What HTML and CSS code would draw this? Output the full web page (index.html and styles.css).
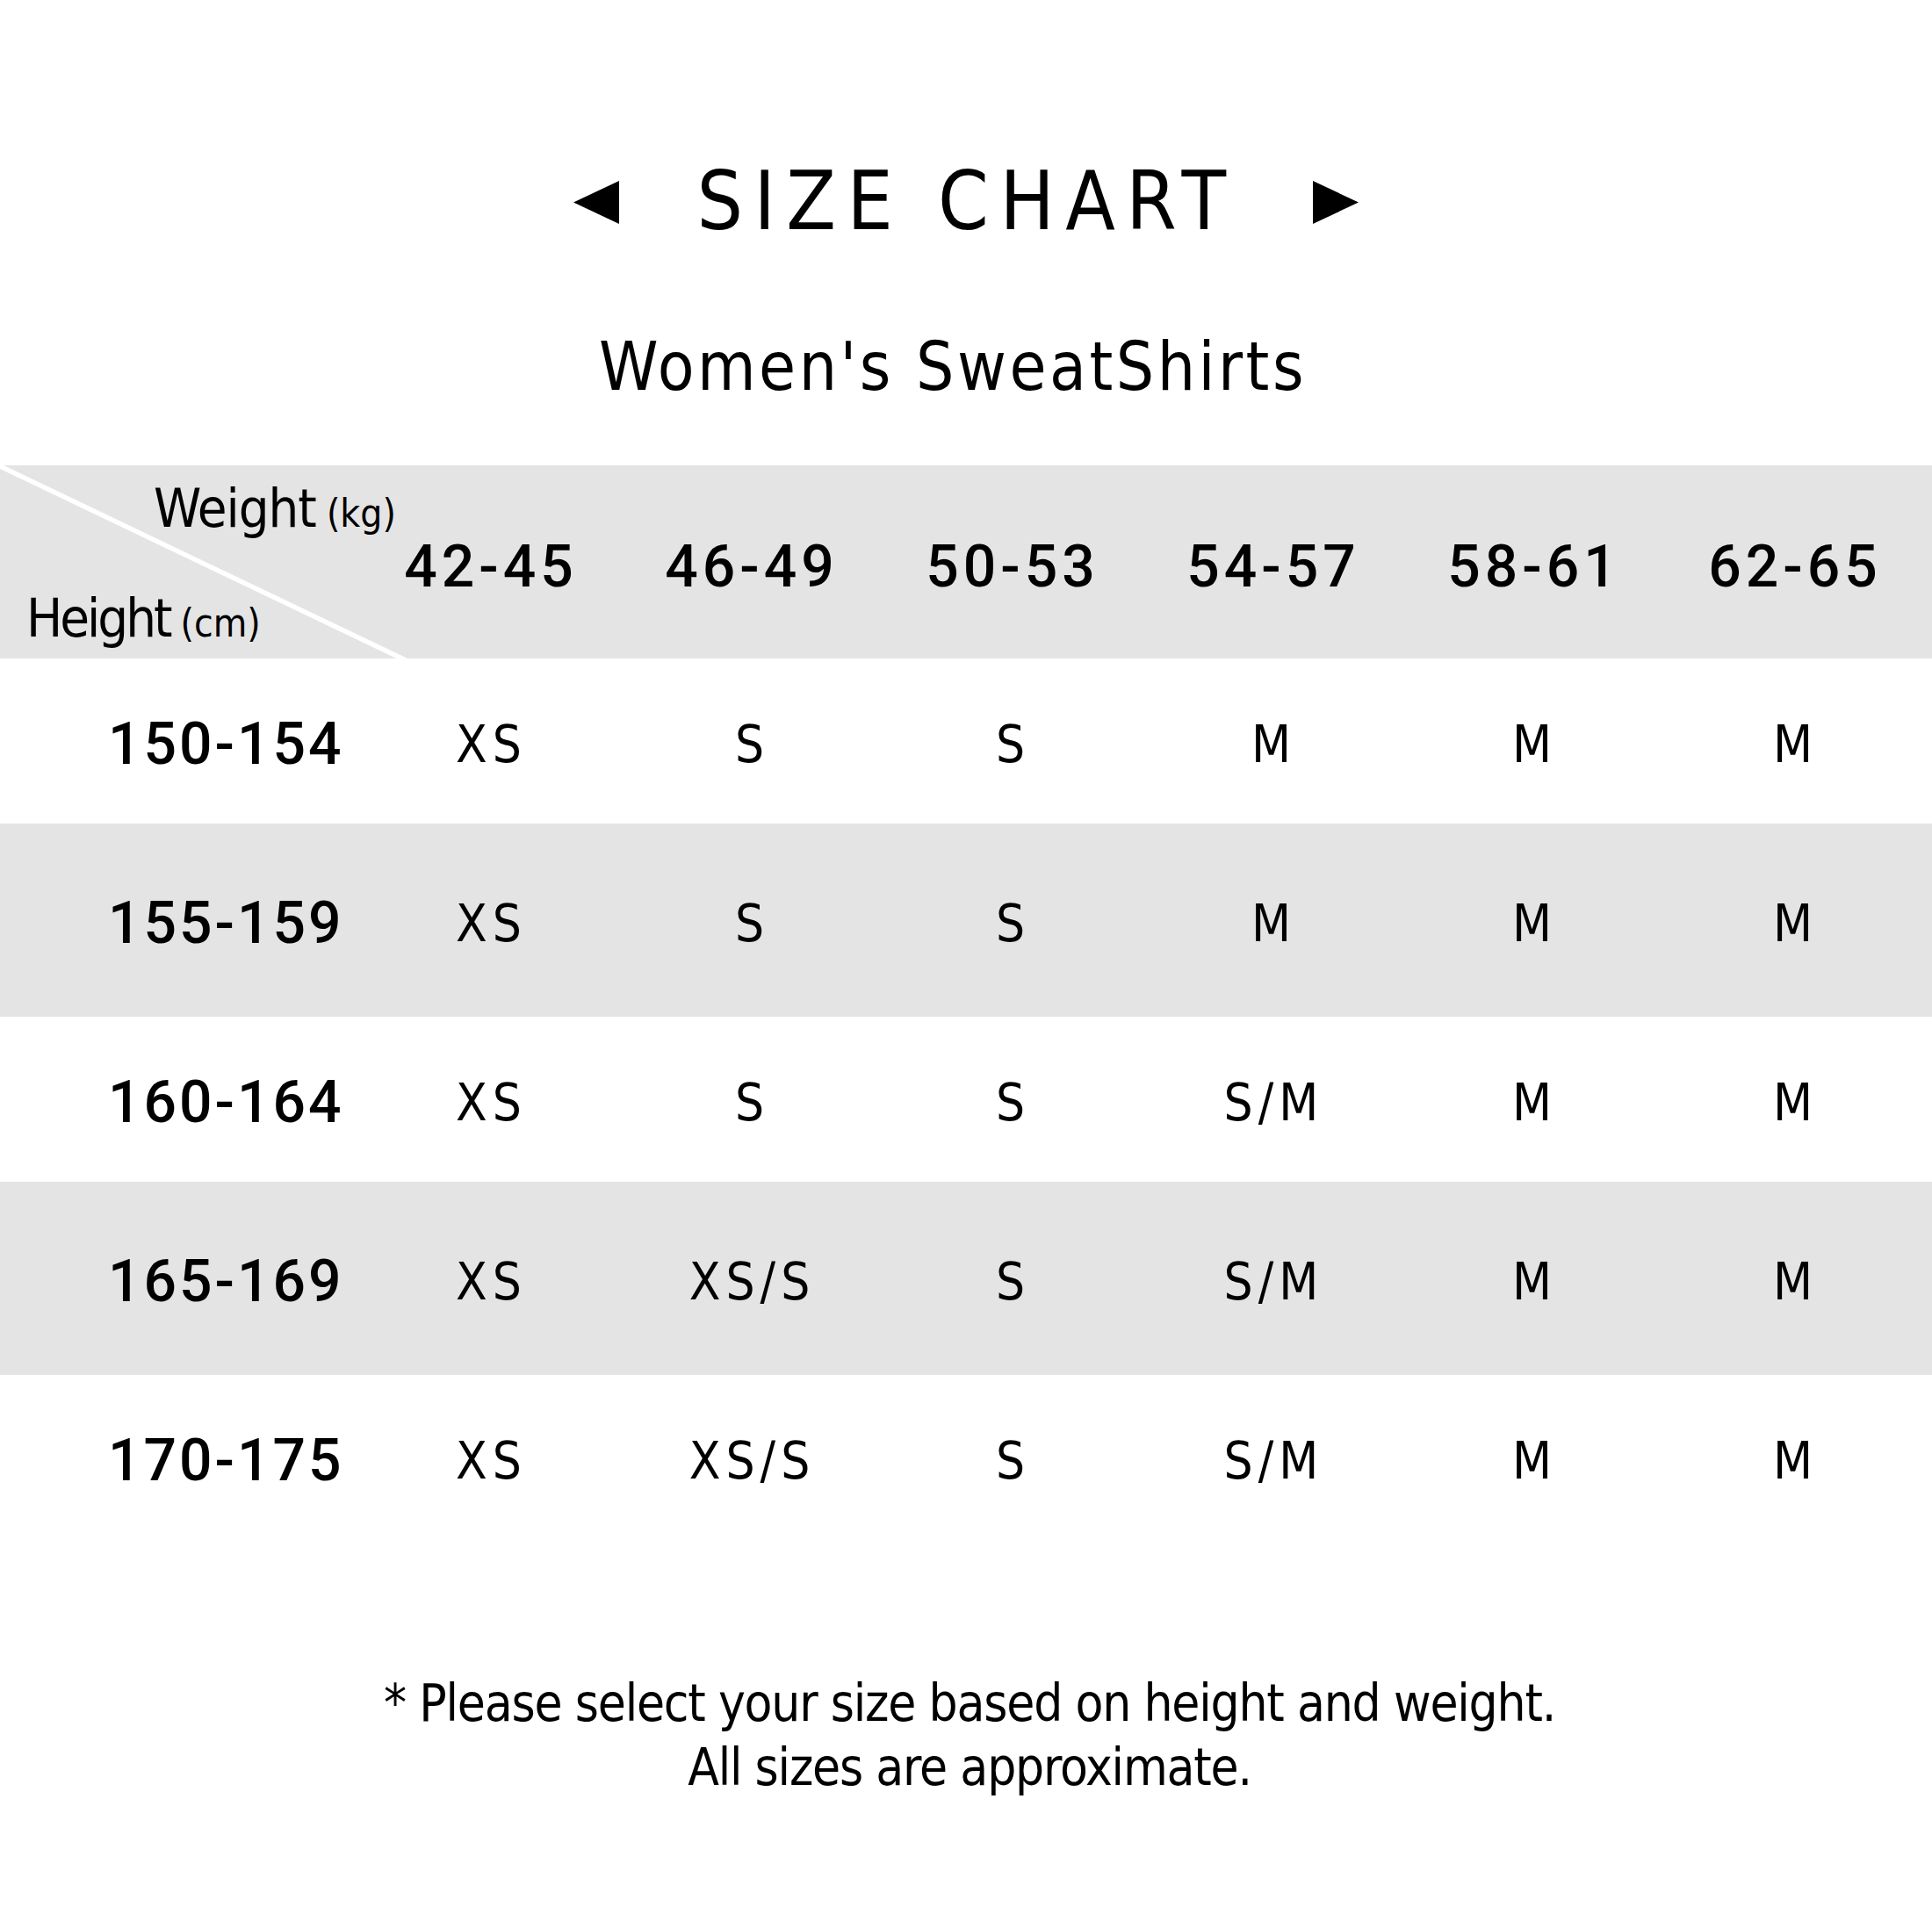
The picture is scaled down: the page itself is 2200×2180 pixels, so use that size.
FILE: index.html
```html
<!DOCTYPE html>
<html lang="en">
<head>
<meta charset="utf-8">
<title>Size Chart</title>
<link rel="stylesheet" href="styles.css">
</head>
<body>
<main class="page">
  <header class="title-row">
    <svg class="arrow" viewBox="0 0 52 49" width="52" height="49"><polygon points="52,0 52,49 0,24.5" fill="#000"/></svg>
    <h1 class="title">SIZE CHART</h1>
    <svg class="arrow" viewBox="0 0 52 49" width="52" height="49"><polygon points="0,0 0,49 52,24.5" fill="#000"/></svg>
  </header>
  <h2 class="subtitle">Women's SweatShirts</h2>

  <section class="chart">
    <div class="row head">
      <svg class="diag" width="470" height="220" viewBox="0 0 470 220"><line x1="-2" y1="0" x2="462" y2="222" stroke="#fff" stroke-width="5.5"/></svg>
      <div class="corner">
        <div class="lbl weight">Weight<span class="unit">(kg)</span></div>
        <div class="lbl height">Height<span class="unit">(cm)</span></div>
      </div>
      <div class="cell num">42-45</div>
      <div class="cell num">46-49</div>
      <div class="cell num">50-53</div>
      <div class="cell num">54-57</div>
      <div class="cell num">58-61</div>
      <div class="cell num">62-65</div>
    </div>
    <div class="row light">
      <div class="cell rowlbl">150-154</div>
      <div class="cell size">XS</div><div class="cell size">S</div><div class="cell size">S</div><div class="cell size">M</div><div class="cell size">M</div><div class="cell size">M</div>
    </div>
    <div class="row grey">
      <div class="cell rowlbl">155-159</div>
      <div class="cell size">XS</div><div class="cell size">S</div><div class="cell size">S</div><div class="cell size">M</div><div class="cell size">M</div><div class="cell size">M</div>
    </div>
    <div class="row light">
      <div class="cell rowlbl">160-164</div>
      <div class="cell size">XS</div><div class="cell size">S</div><div class="cell size">S</div><div class="cell size">S/M</div><div class="cell size">M</div><div class="cell size">M</div>
    </div>
    <div class="row grey">
      <div class="cell rowlbl">165-169</div>
      <div class="cell size">XS</div><div class="cell size">XS/S</div><div class="cell size">S</div><div class="cell size">S/M</div><div class="cell size">M</div><div class="cell size">M</div>
    </div>
    <div class="row light">
      <div class="cell rowlbl">170-175</div>
      <div class="cell size">XS</div><div class="cell size">XS/S</div><div class="cell size">S</div><div class="cell size">S/M</div><div class="cell size">M</div><div class="cell size">M</div>
    </div>
  </section>

  <p class="note">* Please select your size based on height and weight.<br>All sizes are approximate.</p>
</main>
</body>
</html>
```

FILE: styles.css
```css
html, body {
  margin: 0;
  padding: 0;
  background: #fff;
}

body {
  width: 2200px;
  color: #000;
  font-family: "DejaVu Sans Condensed", "DejaVu Sans", "Liberation Sans", sans-serif;
  font-stretch: condensed;
}

.page {
  display: flex;
  flex-direction: column;
}

.title-row {
  margin-top: 170px;
  height: 120px;
  display: flex;
  align-items: center;
  justify-content: center;
  gap: 88px;
}

.arrow {
  display: block;
  flex: none;
}

.title {
  margin: 0;
  font-size: 92px;
  font-weight: 400;
  line-height: 1;
  letter-spacing: 12.5px;
  margin-right: -2px;
}

.subtitle {
  margin: 78px 0 62px;
  padding-right: 30px;
  height: 100px;
  display: flex;
  align-items: center;
  justify-content: center;
  font-size: 76px;
  font-weight: 400;
  line-height: 1;
  letter-spacing: 3.5px;
}

.chart {
  display: flex;
  flex-direction: column;
}

.row {
  display: grid;
  grid-template-columns: 408px repeat(6, 297px);
  align-items: center;
}

.row.head {
  position: relative;
  height: 220px;
  background: #e4e4e4;
}

.row.light {
  height: 188px;
  background: #fff;
}

.row.grey {
  height: 220px;
  background: #e4e4e4;
}

.diag {
  position: absolute;
  left: 0;
  top: 0;
  overflow: visible;
}

.corner {
  position: relative;
  align-self: stretch;
  display: flex;
  flex-direction: column;
  padding-top: 18px;
  white-space: nowrap;
}

.lbl {
  font-size: 61px;
  line-height: 1;
}

.weight {
  padding-left: 175px;
  letter-spacing: -1px;
}

.height {
  margin-top: 64px;
  padding-left: 30px;
  letter-spacing: -3px;
}

.unit {
  font-size: 44px;
  letter-spacing: 0;
  margin-left: 12px;
}

.cell {
  text-align: center;
  line-height: 1;
  white-space: nowrap;
}

.num {
  font-family: Roboto, "Liberation Sans", sans-serif;
  font-stretch: normal;
  font-size: 66px;
  font-weight: 500;
  letter-spacing: 5px;
  padding-top: 12px;
  text-indent: 5px;
}

.rowlbl {
  font-family: Roboto, "Liberation Sans", sans-serif;
  font-stretch: normal;
  text-align: left;
  padding-left: 123px;
  padding-top: 8px;
  font-size: 66px;
  font-weight: 500;
  letter-spacing: 3px;
}

.size {
  font-size: 58px;
  font-weight: 400;
  letter-spacing: 6px;
  text-indent: 6px;
  padding-top: 8px;
}

.note {
  margin: 150px 0 0;
  padding-left: 8px;
  text-align: center;
  font-size: 58px;
  line-height: 73px;
  letter-spacing: -1.2px;
}
```
